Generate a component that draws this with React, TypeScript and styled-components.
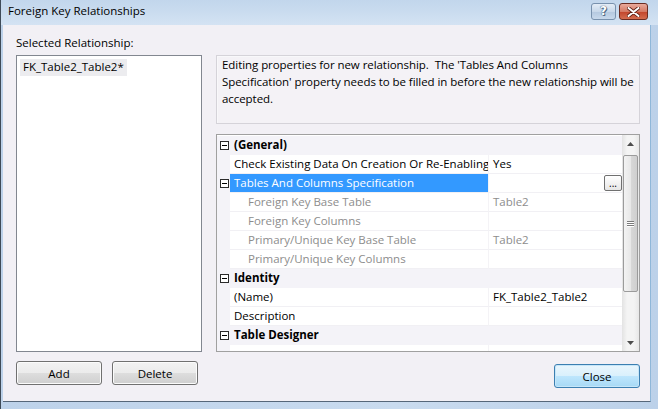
import React from 'react';
import styled, {createGlobalStyle} from 'styled-components';

const GlobalStyle = createGlobalStyle`
    html, body {
        margin: 0;
        padding: 0;
        background: #ffffff;
    }
    * {
        box-sizing: border-box;
    }
`;

type PropRow = {
    kind: 'cat' | 'prop' | 'sub',
    label: string,
    value?: string,
    expander?: boolean,
    selected?: boolean,
    ellipsis?: boolean,
};

const rows: PropRow[] = [
    {kind: 'cat', label: '(General)'},
    {kind: 'prop', label: 'Check Existing Data On Creation Or Re-Enabling', value: 'Yes'},
    {kind: 'prop', label: 'Tables And Columns Specification', expander: true, selected: true, ellipsis: true},
    {kind: 'sub', label: 'Foreign Key Base Table', value: 'Table2'},
    {kind: 'sub', label: 'Foreign Key Columns'},
    {kind: 'sub', label: 'Primary/Unique Key Base Table', value: 'Table2'},
    {kind: 'sub', label: 'Primary/Unique Key Columns'},
    {kind: 'cat', label: 'Identity'},
    {kind: 'prop', label: '(Name)', value: 'FK_Table2_Table2'},
    {kind: 'prop', label: 'Description'},
    {kind: 'cat', label: 'Table Designer'},
    // next row only peeks in below the fold
    {kind: 'prop', label: ''},
];

const MinusBox = () => (
    <svg width="9" height="9" viewBox="0 0 9 9">
        <rect x="0.5" y="0.5" width="8" height="8" fill="#ffffff" stroke="#2b2b2b" />
        <path d="M2 4.5h5" stroke="#000000" strokeWidth="1" />
    </svg>
);

const App = () => {
    return (
        <>
            <GlobalStyle />
            <Window>
                <TitleBar>
                    <Title>Foreign Key Relationships</Title>
                    <CaptionButtons>
                        <HelpButton>?</HelpButton>
                        <CloseCaption>
                            <svg width="13" height="10" viewBox="0 0 13 10">
                                <path d="M1.5 1 L11.5 9 M11.5 1 L1.5 9" stroke="#5a1d12" strokeWidth="3.6" strokeLinecap="round" />
                                <path d="M1.5 1 L11.5 9 M11.5 1 L1.5 9" stroke="#ffffff" strokeWidth="2" strokeLinecap="round" />
                            </svg>
                        </CloseCaption>
                    </CaptionButtons>
                </TitleBar>
                <Client>
                    <LeftColumn>
                        <Label>Selected Relationship:</Label>
                        <ListBox>
                            <ListItem>FK_Table2_Table2*</ListItem>
                        </ListBox>
                        <ButtonRow>
                            <Button>Add</Button>
                            <Button>Delete</Button>
                        </ButtonRow>
                    </LeftColumn>
                    <RightColumn>
                        <Description>
                            Editing properties for new relationship.&nbsp; The 'Tables And Columns Specification' property needs to be filled in before the new relationship will be accepted.
                        </Description>
                        <PropertyGrid>
                            <GridRows>
                                {rows.map((row, i) => (
                                    <Row key={i} category={row.kind === 'cat'}>
                                        <Gutter>
                                            {(row.kind === 'cat' || row.expander) && <MinusBox />}
                                        </Gutter>
                                        <NameCell
                                            category={row.kind === 'cat'}
                                            sub={row.kind === 'sub'}
                                            selected={row.selected}
                                        >
                                            <Highlight selected={row.selected}>{row.label}</Highlight>
                                        </NameCell>
                                        <ValueCell category={row.kind === 'cat'} sub={row.kind === 'sub'}>
                                            {row.value}
                                            {row.ellipsis && <EllipsisButton>...</EllipsisButton>}
                                        </ValueCell>
                                    </Row>
                                ))}
                            </GridRows>
                            <ScrollBar>
                                <ScrollArrow>
                                    <svg width="7" height="4" viewBox="0 0 7 4"><path d="M0 4 L3.5 0 L7 4z" fill="#4d4d4d" /></svg>
                                </ScrollArrow>
                                <Track>
                                    <Thumb>
                                        <Grip />
                                        <Grip />
                                        <Grip />
                                    </Thumb>
                                </Track>
                                <ScrollArrow>
                                    <svg width="7" height="4" viewBox="0 0 7 4"><path d="M0 0 L3.5 4 L7 0z" fill="#4d4d4d" /></svg>
                                </ScrollArrow>
                            </ScrollBar>
                        </PropertyGrid>
                        <CloseRow>
                            <Button primary>Close</Button>
                        </CloseRow>
                    </RightColumn>
                </Client>
            </Window>
        </>
    )
}

export default App;

const fontStack = `"Segoe UI", "Open Sans", "Noto Sans", sans-serif`;

const Window = styled.div`
    width: 658px;
    height: 409px;
    display: flex;
    flex-direction: column;
    background: linear-gradient(to right, #bdd2ea, #c9dbef 60%, #bcd1e9);
    border-left: 1px solid #3f4b58;
    padding: 0 7px 7px 2px;
    position: relative;
    overflow: hidden;
    font-family: ${fontStack};
    font-size: 11.5px;
    color: #000000;
`;

const TitleBar = styled.div`
    height: 25px;
    display: flex;
    align-items: flex-start;
    margin-right: -7px;
    margin-left: -2px;
    padding-left: 7px;
    background: linear-gradient(to bottom, #c2d6ec, #cadcef 50%, #d4e3f3);
`;

const Title = styled.div`
    line-height: 22px;
    font-size: 11.5px;
    color: #000000;
    flex: 1;
`;

const CaptionButtons = styled.div`
    display: flex;
    gap: 3px;
    margin-top: 3px;
    margin-right: 10px;
`;

const HelpButton = styled.div`
    width: 25px;
    height: 17px;
    border: 1px solid #7891ad;
    border-radius: 3px;
    background: linear-gradient(to bottom, #e3ecf6, #c8d8ea 50%, #b4c8df 51%, #c8d9ec);
    color: #ffffff;
    font-family: "DejaVu Sans", sans-serif;
    font-weight: bold;
    font-size: 12px;
    line-height: 15px;
    text-align: center;
    text-shadow: 0 0 1px #3c5470, 0 0 1px #3c5470, 1px 1px 0 #56708d;
`;

const CloseCaption = styled.div`
    width: 29px;
    height: 17px;
    border: 1px solid #6b2c22;
    border-radius: 3px;
    background: linear-gradient(to bottom, #e9a99b, #d47a65 50%, #c2442b 51%, #d36c4f);
    display: flex;
    align-items: center;
    justify-content: center;
`;

const Client = styled.div`
    flex: 1;
    display: flex;
    gap: 14px;
    background: #f2f0f5;
    padding: 0 10px 0 13px;
    border-right: 1px solid #8fb7d9;
    border-bottom: 1px solid #56677a;
`;

const LeftColumn = styled.div`
    width: 186px;
    display: flex;
    flex-direction: column;
    padding-top: 10px;
`;

const Label = styled.div`
    line-height: 16px;
    height: 16px;
`;

const ListBox = styled.div`
    margin-top: 4px;
    height: 297px;
    background: #ffffff;
    border: 1px solid #828790;
    padding: 3px 3px;
`;

const ListItem = styled.div`
    display: inline-block;
    background: #ececef;
    padding: 0 3px;
    line-height: 16px;
    height: 17px;
`;

const ButtonRow = styled.div`
    display: flex;
    gap: 10px;
    margin-top: 9px;
`;

const Button = styled.div<{primary?: boolean}>`
    width: 86px;
    height: 24px;
    border: 1px solid ${props => props.primary ? '#3c7fb1' : '#707070'};
    border-radius: 3px;
    background: ${props => props.primary
        ? 'linear-gradient(to bottom, #eaf6fd, #d9f0fc 50%, #bee6fd 51%, #a7d9f5)'
        : 'linear-gradient(to bottom, #f2f2f2, #ebebeb 50%, #dddddd 51%, #cfcfcf)'};
    box-shadow: inset 0 0 0 1px ${props => props.primary ? '#c6e6f9' : '#fbfbfb'};
    display: flex;
    align-items: center;
    justify-content: center;
    font-size: 11.5px;
`;

const RightColumn = styled.div`
    width: 424px;
    display: flex;
    flex-direction: column;
    padding-top: 30px;
`;

const Description = styled.div`
    height: 69px;
    border: 1px solid #d5d3d9;
    box-shadow: inset 1px 1px 0 #f8f8fa;
    padding: 0 1px 0 5px;
    line-height: 17px;
    letter-spacing: -0.06px;
    background: #f4f2f6;
`;

const PropertyGrid = styled.div`
    margin-top: 10px;
    height: 218px;
    border: 1px solid #a0a0a0;
    background: #ffffff;
    display: flex;
`;

const GridRows = styled.div`
    flex: 1;
    overflow: hidden;
    padding-top: 1px;
`;

const Row = styled.div<{category?: boolean}>`
    display: grid;
    grid-template-columns: 13px 259px 1fr;
    height: 19px;
    background: ${props => props.category ? '#f4f3f8' : '#ffffff'};
`;

const Gutter = styled.div`
    background: #f4f3f8;
    display: flex;
    align-items: center;
    justify-content: flex-end;
    padding-right: 1px;
`;

const NameCell = styled.div<{category?: boolean, sub?: boolean, selected?: boolean}>`
    padding-left: ${props => props.sub ? '18px' : '4px'};
    border-bottom: 1px solid ${props => props.category ? '#f4f3f8' : '#f1f0f4'};
    border-right: 1px solid ${props => props.category ? '#f4f3f8' : '#f4f3f6'};
    font-weight: ${props => props.category ? 'bold' : 'normal'};
    color: ${props => props.sub ? '#8d8d8d' : '#000000'};
    background: ${props => props.selected ? '#3399ff' : 'transparent'};
    line-height: 18px;
    white-space: nowrap;
    overflow: hidden;
`;

const Highlight = styled.span<{selected?: boolean}>`
    color: ${props => props.selected ? '#ffffff' : 'inherit'};
`;

const ValueCell = styled.div<{category?: boolean, sub?: boolean}>`
    position: relative;
    padding-left: 4px;
    border-bottom: 1px solid ${props => props.category ? '#f4f3f8' : '#f1f0f4'};
    color: ${props => props.sub ? '#8d8d8d' : '#000000'};
    line-height: 18px;
    white-space: nowrap;
`;

const EllipsisButton = styled.div`
    position: absolute;
    right: 0;
    top: 1px;
    width: 18px;
    height: 16px;
    border: 1px solid #707070;
    border-radius: 2px;
    background: linear-gradient(to bottom, #ffffff, #e6e6e6);
    font-size: 10px;
    line-height: 14px;
    text-align: center;
    color: #000000;
`;

const ScrollBar = styled.div`
    width: 17px;
    display: flex;
    flex-direction: column;
    background: linear-gradient(to right, #e3e3e3, #f4f4f4 30%, #f4f4f4 70%, #e8e8e8);
`;

const ScrollArrow = styled.div`
    height: 17px;
    display: flex;
    align-items: center;
    justify-content: center;
`;

const Track = styled.div`
    flex: 1;
    padding-top: 3px;
`;

const Thumb = styled.div`
    height: 137px;
    margin: 0 1px;
    border: 1px solid #9b9b9b;
    border-radius: 2px;
    background: linear-gradient(to right, #f3f3f3, #e8e8e8 50%, #d8d8d8 51%, #cfcfcf);
    display: flex;
    flex-direction: column;
    align-items: center;
    justify-content: center;
    gap: 1px;
`;

const Grip = styled.div`
    width: 7px;
    height: 1px;
    background: #7a7a7a;
    box-shadow: 0 1px 0 #ffffff;
`;

const CloseRow = styled.div`
    display: flex;
    justify-content: flex-end;
    margin-top: 12px;
`;
